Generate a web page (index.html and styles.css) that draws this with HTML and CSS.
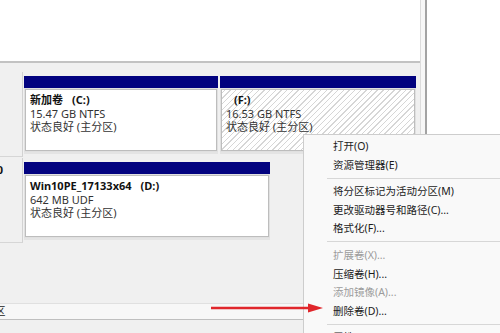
FILE: index.html
```html
<!DOCTYPE html>
<html lang="zh-CN">
<head>
  <meta charset="UTF-8">
  <meta name="viewport" content="width=device-width, initial-scale=1.0">
  <link rel="stylesheet" href="styles.css">
  <title>磁盘管理</title>
</head>
<body>
  <div class="window">
    <div class="main">
      <div class="volumes"></div>
      <div class="disks">
        <div class="disk">
          <div class="disk-label"></div>
          <div class="part part-c">
            <div class="part-bar"></div>
            <div class="part-body">
              <div class="part-name">新加卷<span class="gap"></span>(C:)</div>
              <div>15.47 GB NTFS</div>
              <div>状态良好 (主分区)</div>
            </div>
          </div>
          <div class="part part-f">
            <div class="part-bar"></div>
            <div class="part-body hatched">
              <div class="part-name"><span class="gap-f"></span>(F:)</div>
              <div>16.53 GB NTFS</div>
              <div>状态良好 (主分区)</div>
            </div>
          </div>
        </div>
        <div class="disk">
          <div class="disk-label"><span class="disk-name">CD-ROM 0</span></div>
          <div class="part part-d">
            <div class="part-bar"></div>
            <div class="part-body">
              <div class="part-name">Win10PE_17133x64<span class="gap"></span>(D:)</div>
              <div>642 MB UDF</div>
              <div>状态良好 (主分区)</div>
            </div>
          </div>
        </div>
      </div>
      <div class="legend"><span class="legend-item">主分区</span></div>
    </div>
    <div class="splitter"></div>
    <div class="side"></div>
  </div>

  <ul class="menu">
    <li>打开(O)</li>
    <li>资源管理器(E)</li>
    <li class="sep"></li>
    <li>将分区标记为活动分区(M)</li>
    <li>更改驱动器号和路径(C)...</li>
    <li>格式化(F)...</li>
    <li class="sep"></li>
    <li class="off">扩展卷(X)...</li>
    <li>压缩卷(H)...</li>
    <li class="off">添加镜像(A)...</li>
    <li>删除卷(D)...</li>
    <li class="sep"></li>
    <li>属性(P)</li>
  </ul>

  <svg class="arrow" width="118" height="16" viewBox="0 0 118 16">
    <line x1="3" y1="8" x2="104" y2="8" stroke="#e0262b" stroke-width="2.5"/>
    <polygon points="100,3.5 115,8 100,12.5" fill="#e0262b"/>
  </svg>
</body>
</html>
```

FILE: styles.css
```css
body {
  margin: 0;
  width: 500px;
  height: 333px;
  overflow: hidden;
  position: relative;
  background-color: #f0f0f0;
  font-family: "Noto Sans", "Noto Sans CJK SC", sans-serif;
}

.window {
  display: flex;
  height: 333px;
}

.main {
  width: 420px;
  display: flex;
  flex-direction: column;
  border-right: 1px solid #dcdcdc;
}

.volumes {
  height: 61px;
  background-color: #fff;
  border-bottom: 2px solid #c2c2c2;
}

.disks {
  padding-top: 9px;
  display: flex;
  flex-direction: column;
  gap: 1px;
}

.disk {
  display: flex;
  align-items: flex-start;
  height: 85px;
}

.disk-label {
  width: 22px;
  height: 84px;
  border-right: 1px solid #d2d2d2;
  border-bottom: 1px solid #d6d6d6;
  overflow: hidden;
}

.disk-name {
  display: block;
  width: 63px;
  margin-left: -60px;
  margin-top: 5px;
  text-align: right;
  white-space: nowrap;
  font-size: 11px;
  font-weight: bold;
  line-height: 13px;
  color: #111;
}

.part {
  margin-top: 4px;
  margin-left: 1px;
  display: flex;
  flex-direction: column;
  border-bottom: 2px solid #e4e4e4;
}

.part-c {
  width: 194px;
}

.part-f {
  width: 196px;
  margin-left: 2px;
}

.part-d {
  width: 246px;
}

.part-bar {
  height: 12px;
  background-color: #02027f;
}

.part-body {
  height: 64px;
  box-sizing: border-box;
  padding: 4px 5px;
  background-color: #fff;
  border: 1px solid #e0e0e0;
  box-shadow: inset 0 0 0 1px #bdbdbd;
  font-size: 11px;
  line-height: 13.5px;
  color: #333;
  white-space: nowrap;
  overflow: hidden;
}

.hatched {
  background: repeating-linear-gradient(135deg, #fff 0 3px, #d6d6d6 3px 4px);
}

.part-name {
  font-weight: bold;
  color: #111;
}

.gap {
  display: inline-block;
  width: 9px;
}

.gap-f {
  display: inline-block;
  width: 8px;
}

.legend {
  margin-top: auto;
  margin-bottom: 13px;
  height: 15px;
  background-color: #f7f7f7;
  border-top: 1px solid #e0e0e0;
  border-bottom: 1px solid #bfbfbf;
  font-size: 10.5px;
  line-height: 15px;
  color: #222;
  white-space: nowrap;
  overflow: hidden;
}

.legend-item {
  margin-left: -26px;
}

.splitter {
  width: 4px;
  background-color: #f7f7f7;
  border-right: 2px solid #a3a3a3;
}

.side {
  flex: 1;
  background-color: #fff;
}

/* context menu floats over the window */
.menu {
  position: absolute;
  left: 303px;
  top: 134px;
  width: 197px;
  height: 196px;
  margin: 0;
  padding: 2px 0 0 0;
  list-style: none;
  background-color: #f9f9f9;
  border: 1px solid #cdcdcd;
  border-right: 0;
  border-bottom: 0;
  overflow: hidden;
  font-size: 10.5px;
}

.menu li {
  line-height: 18.6px;
  padding-left: 29px;
  color: #1b1b1b;
  white-space: nowrap;
}

.menu .sep {
  height: 1px;
  padding: 0;
  margin: 3.5px 0 3.5px 23px;
  background-color: #d7d7d7;
}

.menu .off {
  color: #9c9c9c;
}

.arrow {
  position: absolute;
  left: 208px;
  top: 300px;
}
```
